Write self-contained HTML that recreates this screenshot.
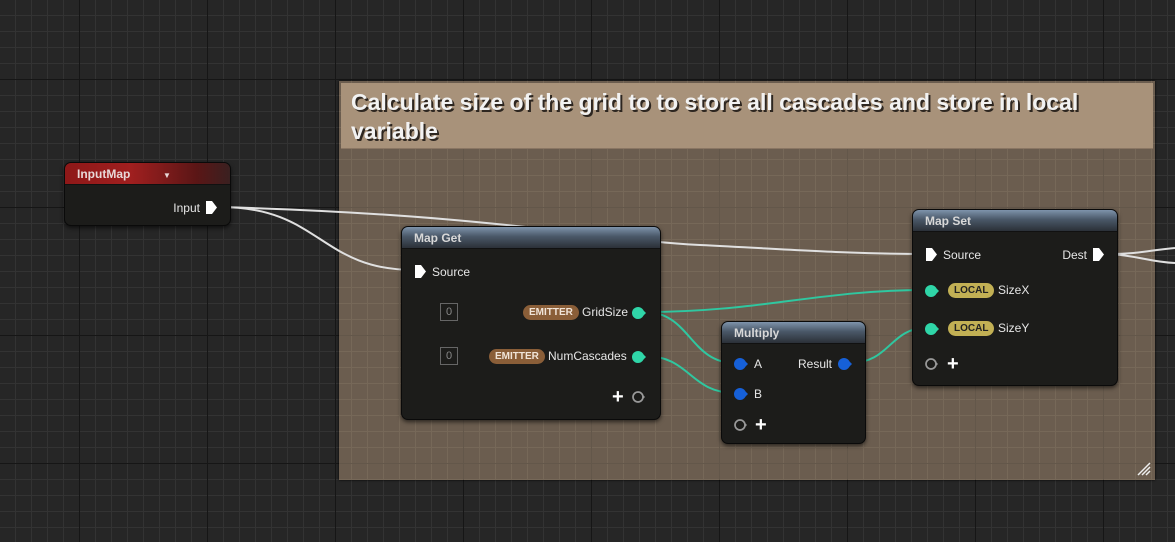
<!DOCTYPE html>
<html><head><style>
*{margin:0;padding:0;box-sizing:border-box}
body{width:1175px;height:542px;overflow:hidden;position:relative;font-family:"Liberation Sans",sans-serif;
background-color:#262626;
background-image:
linear-gradient(90deg,#161616 1px,transparent 1px),
linear-gradient(0deg,#161616 1px,transparent 1px),
linear-gradient(90deg,#333 1px,transparent 1px),
linear-gradient(0deg,#333 1px,transparent 1px);
background-size:128px 128px,128px 128px,16px 16px,16px 16px;
background-position:79px 0,0 80px,15px 0,0 16px;}
.cm{position:absolute;left:339px;top:81px;width:816px;height:399px;background-color:#6b5d4f;
background-image:
linear-gradient(90deg,#63574a 1px,transparent 1px),
linear-gradient(0deg,#63574a 1px,transparent 1px),
linear-gradient(90deg,#766858 1px,transparent 1px),
linear-gradient(0deg,#766858 1px,transparent 1px);
background-size:128px 128px,128px 128px,16px 16px,16px 16px;
background-position:-260px 0,0 -1px,-324px 0,0 -1px;
box-shadow:0 0 2px #000;}
.ch{position:absolute;left:2px;top:2px;right:2px;height:66px;background:#a8927a;border-bottom:1px solid #8a7663;
color:#f2f2f2;font-weight:bold;font-size:23px;line-height:29px;padding:5px 60px 0 10px;text-shadow:2px 2px 0 #2d2620;letter-spacing:0}
.n{position:absolute;background:#1c1c1a;border:1px solid #0a0a0a;border-radius:7px;box-shadow:0 2px 4px rgba(0,0,0,.6);color:#e6e6e6;font-size:12px;line-height:14px}
.h{height:22px;border-radius:6px 6px 0 0;font-weight:bold;color:#d8d8d8;font-size:12px;padding:4px 12px;
background:linear-gradient(180deg,#7e93ab 0,#4a5868 45%,#2b3038 100%);border-bottom:1px solid #111}
.t{position:absolute;white-space:nowrap}
.pill{position:absolute;border-radius:8px;font-size:10px;font-weight:bold;padding:1px 6px;line-height:13px}
.em{background:#8a5e38;color:#f0e4d8}
.lo{background:#c2b054;color:#222}
.box0{position:absolute;width:18px;height:18px;border:1px solid #666;color:#888;font-size:11px;text-align:center;line-height:16px}
.plus{position:absolute;font-size:20px;font-weight:bold;color:#fff;line-height:14px}
</style></head><body>
<div class="cm"><div class="ch">Calculate size of the grid to to store all cascades and store in local variable</div>
<svg style="position:absolute;right:4px;bottom:4px" width="14" height="14"><path d="M13 1L1 13M13 5L5 13M13 9L9 13" stroke="#eee" stroke-width="1.5"/></svg>
</div>

<svg style="position:absolute;left:0;top:0" width="1175" height="542">
<g fill="none" stroke-width="2">
<path d="M220 207 C320 207,320 270,414 270" stroke="#e0e0e0"/>
<path d="M220 207 C500 215,600 240,700 245 S850 254,926 254" stroke="#e0e0e0"/>
<path d="M1110 254 C1140 254,1150 250,1175 248" stroke="#e0e0e0"/>
<path d="M1110 254 C1140 256,1150 262,1175 263" stroke="#e0e0e0"/>
<path d="M645 312 C760 312,820 290,926 290" stroke="#2fc7a0"/>
<path d="M645 312 C690 312,690 363,735 363" stroke="#2fc7a0"/>
<path d="M645 356 C690 356,690 393,735 393" stroke="#2fc7a0"/>
<path d="M850 363 C890 363,890 328,926 328" stroke="#2fc7a0"/>
</g></svg>

<!-- InputMap -->
<div class="n" style="left:64px;top:162px;width:167px;height:64px">
<div class="h" style="background:linear-gradient(90deg,#8e1818 0,#a01f1f 40%,#5a1616 80%,#3a2020 100%);color:#e8d8d8">InputMap<span style="position:absolute;left:98px;top:6px;font-size:8px">▼</span></div>
<div class="t" style="right:30px;top:38px">Input</div>
<svg class="t" style="right:12px;top:37px" width="13" height="15"><path d="M1 1H7L12 7.5L7 14H1Z" fill="#fff"/></svg>
</div>

<!-- Map Get -->
<div class="n" style="left:401px;top:226px;width:260px;height:194px">
<div class="h">Map Get</div>
<svg class="t" style="left:12px;top:37px" width="13" height="15"><path d="M1 1H7L12 7.5L7 14H1Z" fill="#fff"/></svg>
<div class="t" style="left:30px;top:38px">Source</div>
<div class="box0" style="left:38px;top:76px">0</div>
<div class="box0" style="left:38px;top:120px">0</div>
<div class="pill em" style="left:121px;top:78px">EMITTER</div>
<div class="t" style="left:180px;top:78px">GridSize</div>
<svg class="t" style="left:229px;top:78px" width="17" height="16"><circle cx="7" cy="8" r="6" fill="#2fd6a8"/><path d="M12 5L15 8L12 11Z" fill="#2fd6a8"/></svg>
<div class="pill em" style="left:87px;top:122px">EMITTER</div>
<div class="t" style="left:146px;top:122px">NumCascades</div>
<svg class="t" style="left:229px;top:122px" width="17" height="16"><circle cx="7" cy="8" r="6" fill="#2fd6a8"/><path d="M12 5L15 8L12 11Z" fill="#2fd6a8"/></svg>
<div class="plus" style="left:210px;top:163px">+</div>
<svg class="t" style="left:229px;top:162px" width="17" height="16"><circle cx="7" cy="8" r="5" fill="none" stroke="#999" stroke-width="1.7"/><path d="M12 6L14 8L12 10Z" fill="#999"/></svg>
</div>

<!-- Multiply -->
<div class="n" style="left:721px;top:321px;width:145px;height:123px">
<div class="h">Multiply</div>
<svg class="t" style="left:11px;top:34px" width="17" height="16"><circle cx="7" cy="8" r="6" fill="#1660d8"/><path d="M12 5L15 8L12 11Z" fill="#1660d8"/></svg>
<div class="t" style="left:32px;top:35px">A</div>
<div class="t" style="left:76px;top:35px">Result</div>
<svg class="t" style="left:115px;top:34px" width="17" height="16"><circle cx="7" cy="8" r="6" fill="#1660d8"/><path d="M12 5L15 8L12 11Z" fill="#1660d8"/></svg>
<svg class="t" style="left:11px;top:64px" width="17" height="16"><circle cx="7" cy="8" r="6" fill="#1660d8"/><path d="M12 5L15 8L12 11Z" fill="#1660d8"/></svg>
<div class="t" style="left:32px;top:65px">B</div>
<svg class="t" style="left:11px;top:95px" width="17" height="16"><circle cx="7" cy="8" r="5" fill="none" stroke="#999" stroke-width="1.7"/><path d="M12 6L14 8L12 10Z" fill="#999"/></svg>
<div class="plus" style="left:33px;top:96px">+</div>
</div>

<!-- Map Set -->
<div class="n" style="left:912px;top:209px;width:206px;height:177px">
<div class="h">Map Set</div>
<svg class="t" style="left:12px;top:37px" width="13" height="15"><path d="M1 1H7L12 7.5L7 14H1Z" fill="#fff"/></svg>
<div class="t" style="left:30px;top:38px">Source</div>
<div class="t" style="right:30px;top:38px">Dest</div>
<svg class="t" style="right:12px;top:37px" width="13" height="15"><path d="M1 1H7L12 7.5L7 14H1Z" fill="#fff"/></svg>
<svg class="t" style="left:11px;top:73px" width="17" height="16"><circle cx="7" cy="8" r="6" fill="#2fd6a8"/><path d="M12 5L15 8L12 11Z" fill="#2fd6a8"/></svg>
<div class="pill lo" style="left:35px;top:73px">LOCAL</div>
<div class="t" style="left:85px;top:73px">SizeX</div>
<svg class="t" style="left:11px;top:111px" width="17" height="16"><circle cx="7" cy="8" r="6" fill="#2fd6a8"/><path d="M12 5L15 8L12 11Z" fill="#2fd6a8"/></svg>
<div class="pill lo" style="left:35px;top:111px">LOCAL</div>
<div class="t" style="left:85px;top:111px">SizeY</div>
<svg class="t" style="left:11px;top:146px" width="17" height="16"><circle cx="7" cy="8" r="5" fill="none" stroke="#999" stroke-width="1.7"/><path d="M12 6L14 8L12 10Z" fill="#999"/></svg>
<div class="plus" style="left:34px;top:147px">+</div>
</div>
</body></html>
